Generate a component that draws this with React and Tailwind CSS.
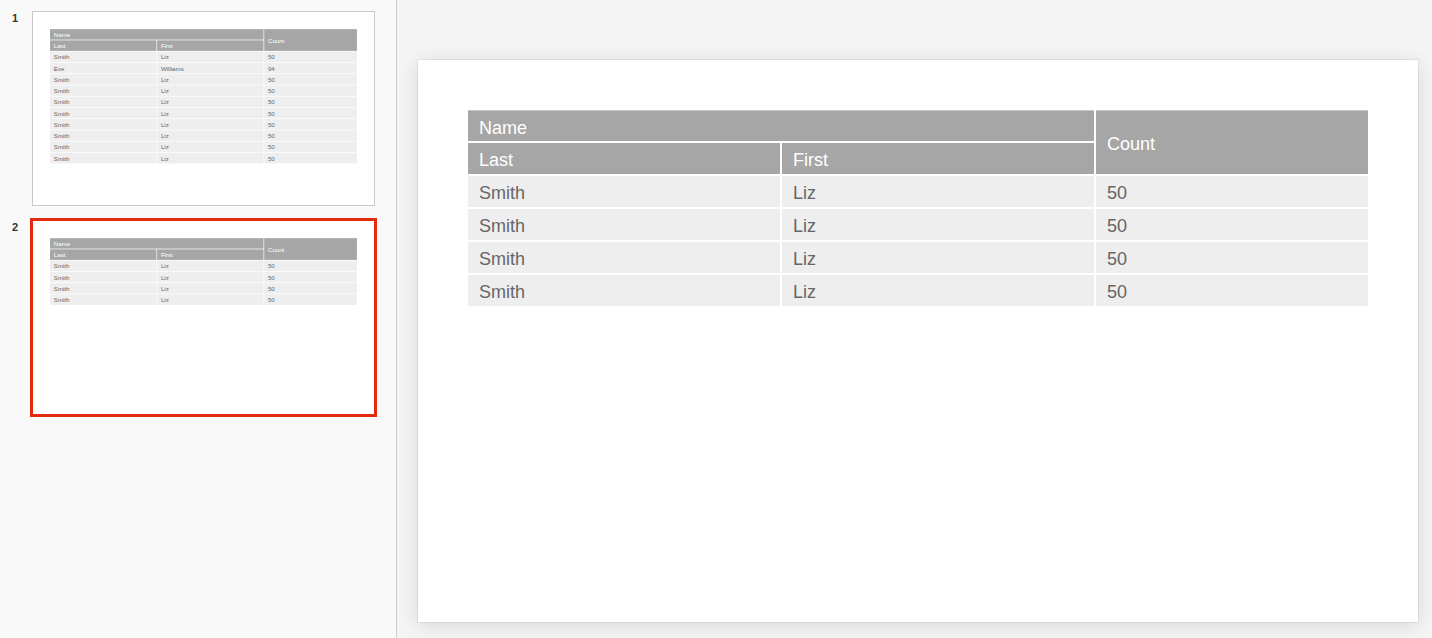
import React from "react";

const HEAD = "bg-[#a6a6a6] text-white";
const CELL = "bg-[#eeeeee] text-[#666666]";

function SlideTable({ rows }) {
  return (
    <div className="pt-[50px] pl-[50px]">
      <div className="grid grid-cols-[312px_312px_272px] auto-rows-[31px] gap-[2px] w-[900px] text-[18px] leading-[1.15]">
        <div className={`${HEAD} col-span-2 flex items-center pl-[11px] pt-[4px] border-t border-[#c6c6c6]`}>Name</div>
        <div className={`${HEAD} row-span-2 flex items-center pl-[11px] pt-[4px] border-t border-[#c6c6c6]`}>Count</div>
        <div className={`${HEAD} flex items-center pl-[11px] pt-[4px]`}>Last</div>
        <div className={`${HEAD} flex items-center pl-[11px] pt-[4px]`}>First</div>
        {rows.map((r, i) => (
          <React.Fragment key={i}>
            <div className={`${CELL} flex items-center pl-[11px] pt-[4px]`}>{r[0]}</div>
            <div className={`${CELL} flex items-center pl-[11px] pt-[4px]`}>{r[1]}</div>
            <div className={`${CELL} flex items-center pl-[11px] pt-[4px]`}>{r[2]}</div>
          </React.Fragment>
        ))}
      </div>
    </div>
  );
}

function Thumb({ rows }) {
  return (
    <div className="w-[341px] h-[193px] overflow-hidden bg-white">
      <div className="w-[1000px] h-[562px] origin-top-left scale-[0.341] bg-white">
        <SlideTable rows={rows} />
      </div>
    </div>
  );
}

const smith = ["Smith", "Liz", "50"];
const rows1 = [smith, ["Eve", "Williams", "94"], smith, smith, smith, smith, smith, smith, smith, smith];
const rows2 = [smith, smith, smith, smith];

export default function App() {
  return (
    <div className="w-full h-screen flex overflow-hidden font-['Liberation_Sans',Arial,sans-serif] bg-[#f4f4f4]">
      <aside className="w-[397px] shrink-0 h-full bg-[#f9f9f9] border-r border-[#cbcbcb] pt-[11px]">
        <div className="flex">
          <div className="w-[32px] pl-[12px] pt-[1px] text-[11px] leading-[13px] font-bold text-[#333333]">1</div>
          <div className="border border-[#c9c9c9]">
            <Thumb rows={rows1} />
          </div>
        </div>
        <div className="flex mt-[12px]">
          <div className="w-[30px] pl-[12px] pt-[3px] text-[11px] leading-[13px] font-bold text-[#333333]">2</div>
          <div className="border-[3px] border-[#e52b0e]">
            <Thumb rows={rows2} />
          </div>
        </div>
      </aside>
      <main className="flex-1 h-full pl-[21px] pt-[60px]">
        <div className="w-[1000px] h-[562px] bg-white shadow-[0_0_0_1px_rgba(0,0,0,0.05),0_3px_18px_rgba(0,0,0,0.12)]">
          <SlideTable rows={rows2} />
        </div>
      </main>
    </div>
  );
}
